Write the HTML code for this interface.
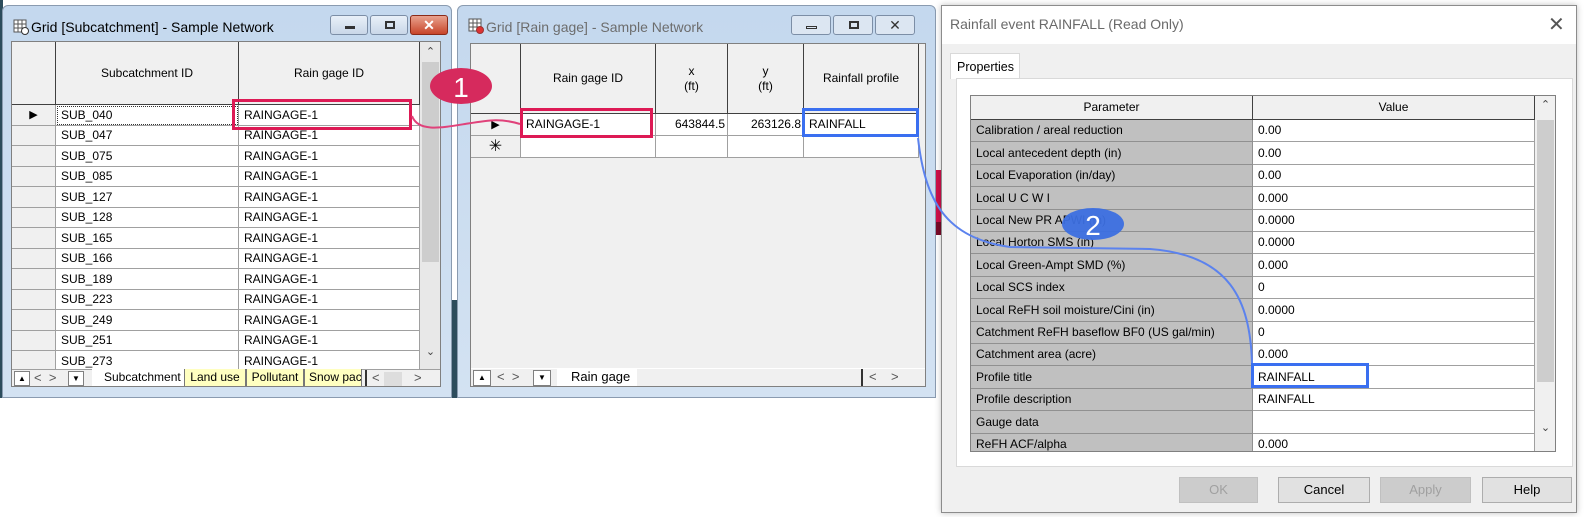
<!DOCTYPE html>
<html><head><meta charset="utf-8"><style>
*{box-sizing:border-box;margin:0;padding:0}
body{width:1587px;height:517px;background:#fff;position:relative;overflow:hidden;font-family:"Liberation Sans",Arial,sans-serif;font-size:12px;color:#000}
.a{position:absolute}
.win{position:absolute;background:linear-gradient(#c4d8ee,#d3e2f2);border:1px solid #8a9bb0;border-radius:6px 6px 0 0}
.tt{position:absolute;font-size:14px;top:13px;left:28px}
.btn{position:absolute;top:9px;height:20px;border:1px solid #7c8ea6;border-radius:3px;background:linear-gradient(#e9f0f8,#c9d7e8)}
.c{position:absolute;border-right:1px solid #a0a0a0;border-bottom:1px solid #a0a0a0;overflow:hidden;white-space:nowrap;padding-left:5px}
.h{background:#f0f0f0;text-align:center;padding:0;display:flex;align-items:center;justify-content:center;line-height:15px;border-right:1px solid #404040;border-bottom:1px solid #404040}
.rh{background:#f0f0f0;text-align:center;padding:0}
.p{background:#c0c0c0;border-color:#909090}
.db{position:absolute;top:477px;height:26px;border:1px solid #adadad;background:#e1e1e1;font-size:13px;text-align:center;line-height:24px}
</style></head><body>

<div class="a" style="left:0;top:0;width:3px;height:398px;background:#2c4c5c"></div>
<div class="a" style="left:451px;top:300px;width:6px;height:98px;background:#2c4c5c"></div>
<div class="a" style="left:936px;top:170px;width:6px;height:52px;background:#d0104a"></div>
<div class="a" style="left:936px;top:222px;width:6px;height:13px;background:#7a0a28"></div>

<div class="win" style="left:2px;top:5px;width:450px;height:393px">
 <svg class="a" style="left:10px;top:13px" width="16" height="16" viewBox="0 0 16 16"><rect x="1" y="1" width="12" height="12" fill="#fff" stroke="#555"/><path d="M1 5H13M1 9H13M5 1V13M9 1V13" stroke="#555"/><circle cx="12" cy="12" r="3.5" fill="#fff" stroke="#333"/></svg>
 <div class="tt">Grid [Subcatchment] - Sample Network</div>
 <div class="btn" style="left:327px;width:38px"><div class="a" style="left:14px;top:10px;width:10px;height:3px;background:#333"></div></div>
 <div class="btn" style="left:367px;width:38px"><div class="a" style="left:14px;top:5px;width:10px;height:8px;border:2px solid #333"></div></div>
 <div class="btn" style="left:407px;width:38px;background:linear-gradient(#e9a28e,#c7452a);border-color:#8a2a18;color:#fff;text-align:center;font-weight:bold;font-size:14px;line-height:18px">✕</div>
</div>
<div class="a" style="left:11px;top:41px;width:430px;height:346px;background:#fff;border:1px solid #808080;overflow:hidden">
 <div class="c h" style="left:0;top:0;width:44px;height:63px"></div>
 <div class="c h" style="left:44px;top:0;width:183px;height:63px">Subcatchment ID</div>
 <div class="c h" style="left:227px;top:0;width:181px;height:63px">Rain gage ID</div>
 <div class="a" style="left:408px;top:0;width:21px;height:328px;background:#e8e8e8"></div>
 <div class="a" style="left:408px;top:0;width:21px;height:18px;text-align:center;font-size:11px;line-height:20px;color:#444">&#8963;</div>
 <div class="a" style="left:410px;top:20px;width:17px;height:200px;background:#cdcdcd"></div>
 <div class="a" style="left:408px;top:303px;width:21px;height:18px;text-align:center;font-size:11px;color:#444">&#8964;</div>
 <div id="g1"></div>
 <div class="a" style="left:0;top:327px;width:430px;height:19px;background:#f0f0f0;border-top:1px solid #a0a0a0"></div>
 <div class="a" style="left:2px;top:329px;width:16px;height:15px;border:1px solid #808080;background:#fff;font-size:8px;text-align:center;line-height:13px">▲</div>
 <div class="a" style="left:22px;top:328px;font-size:13px;color:#555">&lt;&nbsp;&nbsp;&gt;</div>
 <div class="a" style="left:56px;top:329px;width:16px;height:15px;border:1px solid #808080;background:#fff;font-size:8px;text-align:center;line-height:13px">▼</div>
 <div class="a" style="left:80px;top:327px;width:92px;height:18px;background:#fff;border-bottom:1px solid #555;font-size:12px;padding-left:12px;line-height:17px">Subcatchment</div>
 <div class="a" style="left:172px;top:327px;width:62px;height:18px;background:#ffffc0;border:1px solid #777;border-top:0;text-align:center;line-height:17px">Land use</div>
 <div class="a" style="left:234px;top:327px;width:58px;height:18px;background:#ffffc0;border:1px solid #777;border-top:0;text-align:center;line-height:17px">Pollutant</div>
 <div class="a" style="left:292px;top:327px;width:58px;height:18px;background:#ffffc0;border:1px solid #777;border-top:0;padding-left:4px;line-height:17px;overflow:hidden;white-space:nowrap">Snow pack</div>
 <div class="a" style="left:353px;top:328px;width:2px;height:16px;background:#333"></div>
 <div class="a" style="left:360px;top:328px;font-size:13px;color:#555">&lt;</div>
 <div class="a" style="left:372px;top:330px;width:18px;height:14px;background:#ddd"></div>
 <div class="a" style="left:402px;top:328px;font-size:13px;color:#555">&gt;</div>
</div>

<div class="win" style="left:457px;top:5px;width:479px;height:393px">
 <svg class="a" style="left:10px;top:12px" width="16" height="16" viewBox="0 0 16 16"><rect x="1" y="1" width="12" height="12" fill="#fff" stroke="#555"/><path d="M1 5H13M1 9H13M5 1V13M9 1V13" stroke="#555"/><circle cx="12" cy="12" r="3.5" fill="#d33" stroke="#933"/></svg>
 <div class="tt" style="color:#6d6d6d">Grid [Rain gage] - Sample Network</div>
 <div class="btn" style="left:333px;width:40px;background:#dce6f2"><div class="a" style="left:14px;top:10px;width:11px;height:3px;border:1px solid #333"></div></div>
 <div class="btn" style="left:375px;width:40px;background:#dce6f2"><div class="a" style="left:15px;top:5px;width:10px;height:8px;border:2px solid #333"></div></div>
 <div class="btn" style="left:417px;width:40px;background:#dce6f2;text-align:center;font-size:14px;line-height:18px;color:#333">✕</div>
</div>
<div class="a" style="left:470px;top:43px;width:456px;height:344px;background:#f0f0f0;border:1px solid #808080;overflow:hidden">
 <div class="c h" style="left:0;top:0;width:50px;height:70px"></div>
 <div class="c h" style="left:50px;top:0;width:135px;height:70px">Rain gage ID</div>
 <div class="c h" style="left:185px;top:0;width:72px;height:70px">x<br>(ft)</div>
 <div class="c h" style="left:257px;top:0;width:76px;height:70px">y<br>(ft)</div>
 <div class="c h" style="left:333px;top:0;width:115px;height:70px">Rainfall profile</div>
 <div class="c rh" style="left:0;top:70px;width:50px;height:22px;font-size:11px;line-height:22px">▶</div>
 <div class="c" style="left:50px;top:70px;width:135px;height:22px;background:#fff;line-height:21px">RAINGAGE-1</div>
 <div class="c" style="left:185px;top:70px;width:72px;height:22px;background:#fff;line-height:21px;text-align:right;padding-right:2px">643844.5</div>
 <div class="c" style="left:257px;top:70px;width:76px;height:22px;background:#fff;line-height:21px;text-align:right;padding-right:2px">263126.8</div>
 <div class="c" style="left:333px;top:70px;width:115px;height:22px;background:#fff;line-height:21px">RAINFALL</div>
 <div class="c rh" style="left:0;top:92px;width:50px;height:22px;font-size:16px;line-height:22px">✳</div>
 <div class="c" style="left:50px;top:92px;width:135px;height:22px;background:#fff"></div>
 <div class="c" style="left:185px;top:92px;width:72px;height:22px;background:#fff"></div>
 <div class="c" style="left:257px;top:92px;width:76px;height:22px;background:#fff"></div>
 <div class="c" style="left:333px;top:92px;width:115px;height:22px;background:#fff"></div>
 <div class="a" style="left:0;top:324px;width:456px;height:20px;background:#f0f0f0;border-top:1px solid #fff"></div>
 <div class="a" style="left:2px;top:326px;width:18px;height:16px;border:1px solid #808080;background:#fff;font-size:8px;text-align:center;line-height:14px">▲</div>
 <div class="a" style="left:26px;top:325px;font-size:13px;color:#555">&lt;&nbsp;&nbsp;&gt;</div>
 <div class="a" style="left:62px;top:326px;width:18px;height:16px;border:1px solid #808080;background:#fff;font-size:8px;text-align:center;line-height:14px">▼</div>
 <div class="a" style="left:86px;top:324px;width:80px;height:19px;background:#fff;border-bottom:1px solid #555;padding-left:14px;font-size:13px;line-height:18px">Rain gage</div>
 <div class="a" style="left:390px;top:325px;width:2px;height:18px;background:#333"></div>
 <div class="a" style="left:398px;top:325px;font-size:13px;color:#555">&lt;&nbsp;&nbsp;&nbsp;&nbsp;&gt;</div>
</div>

<div class="a" style="left:941px;top:5px;width:636px;height:508px;background:#f0f0f0;border:1px solid #8c8c8c;box-shadow:0 0 6px rgba(0,0,0,.25)">
 <div class="a" style="left:0;top:0;width:634px;height:38px;background:#fff;font-size:14px;color:#6a6a6a;padding:10px 0 0 8px">Rainfall event RAINFALL (Read Only)</div>
 <div class="a" style="left:606px;top:6px;font-size:20px;color:#555">✕</div>
 <div class="a" style="left:8px;top:47px;width:70px;height:26px;background:#fff;border:1px solid #d9d9d9;border-bottom:0;font-size:12.5px;padding:6px 0 0 6px">Properties</div>
 <div class="a" style="left:14px;top:72px;width:617px;height:389px;background:#fff;border:1px solid #d9d9d9"></div>
</div>
<div class="a" style="left:970px;top:95px;width:586px;height:357px;background:#fff;border:1px solid #808080;overflow:hidden">
 <div class="c h" style="left:0;top:0;width:282px;height:24px">Parameter</div>
 <div class="c h" style="left:282px;top:0;width:282px;height:24px">Value</div>
 <div class="a" style="left:564px;top:0;width:21px;height:357px;background:#f0f0f0"></div>
 <div class="a" style="left:564px;top:2px;width:21px;text-align:center;font-size:11px;color:#444">&#8963;</div>
 <div class="a" style="left:566px;top:24px;width:17px;height:262px;background:#cdcdcd"></div>
 <div class="a" style="left:564px;top:325px;width:21px;text-align:center;font-size:11px;color:#444">&#8964;</div>
 <div id="g3"></div>
</div>
<div class="db" style="left:1179px;width:79px;color:#a0a0a0;background:#cccccc;border-color:#c0c0c0">OK</div>
<div class="db" style="left:1278px;width:92px">Cancel</div>
<div class="db" style="left:1380px;width:91px;color:#a0a0a0;background:#cccccc;border-color:#c0c0c0">Apply</div>
<div class="db" style="left:1482px;width:90px">Help</div>

<div class="a" style="left:232px;top:99px;width:180px;height:31px;border:3px solid #dd1a55"></div>
<div class="a" style="left:520px;top:108px;width:133px;height:30px;border:3px solid #dd1a55"></div>
<div class="a" style="left:802px;top:108px;width:117px;height:29px;border:3px solid #3a6ff0"></div>
<div class="a" style="left:1251px;top:363px;width:118px;height:25px;border:3px solid #3a6ff0"></div>
<svg class="a" style="left:0;top:0" width="1587" height="517">
 <path d="M412 116 C418 132 440 128 465 124 C490 120 500 118 520 124" fill="none" stroke="#e0427a" stroke-width="2"/>
 <path d="M918 138 C925 200 945 238 1010 247 L1150 249 C1230 255 1250 300 1252 363" fill="none" stroke="#5b82ee" stroke-width="2"/>
 <ellipse cx="461" cy="86" rx="31" ry="18" fill="#d62a5d"/>
 <ellipse cx="1093" cy="224" rx="31" ry="16" fill="#3c6fe0" opacity=".95"/>
 <text x="461" y="97" font-family="Liberation Sans" font-size="28" fill="#fff" text-anchor="middle">1</text>
 <text x="1093" y="235" font-family="Liberation Sans" font-size="28" fill="#fff" text-anchor="middle">2</text>
</svg>

<script>
var ids=["SUB_040","SUB_047","SUB_075","SUB_085","SUB_127","SUB_128","SUB_165","SUB_166","SUB_189","SUB_223","SUB_249","SUB_251","SUB_273"],h="";
ids.forEach(function(s,i){var t=Math.round(63+i*20.5),n=Math.round(63+(i+1)*20.5)-t;
h+='<div class="c rh" style="left:0;top:'+t+'px;width:44px;height:'+n+'px;font-size:11px;line-height:'+(n-1)+'px">'+(i==0?'▶':'')+'</div>';
h+='<div class="c" style="left:44px;top:'+t+'px;width:183px;height:'+n+'px;line-height:'+(n-1)+'px'+(i==0?';outline:1px dotted #333;outline-offset:-2px':'')+'">'+s+'</div>';
h+='<div class="c" style="left:227px;top:'+t+'px;width:181px;height:'+n+'px;line-height:'+(n-1)+'px">RAINGAGE-1</div>';});
document.getElementById("g1").outerHTML=h;
var P=[["Calibration / areal reduction","0.00"],["Local antecedent depth (in)","0.00"],["Local Evaporation (in/day)","0.00"],["Local U C W I","0.000"],["Local New PR APWI (in)","0.0000"],["Local Horton SMS (in)","0.0000"],["Local Green-Ampt SMD (%)","0.000"],["Local SCS index","0"],["Local ReFH soil moisture/Cini (in)","0.0000"],["Catchment ReFH baseflow BF0 (US gal/min)","0"],["Catchment area (acre)","0.000"],["Profile title","RAINFALL"],["Profile description","RAINFALL"],["Gauge data",""],["ReFH ACF/alpha","0.000"]];h="";
P.forEach(function(p,i){var t=Math.round(24+i*22.4),n=Math.round(24+(i+1)*22.4)-t;
h+='<div class="c p" style="left:0;top:'+t+'px;width:282px;height:'+n+'px;line-height:'+(n-1)+'px">'+p[0]+'</div>';
h+='<div class="c" style="left:282px;top:'+t+'px;width:282px;height:'+n+'px;line-height:'+(n-1)+'px">'+p[1]+'</div>';});
document.getElementById("g3").outerHTML=h;
</script>
</body></html>
